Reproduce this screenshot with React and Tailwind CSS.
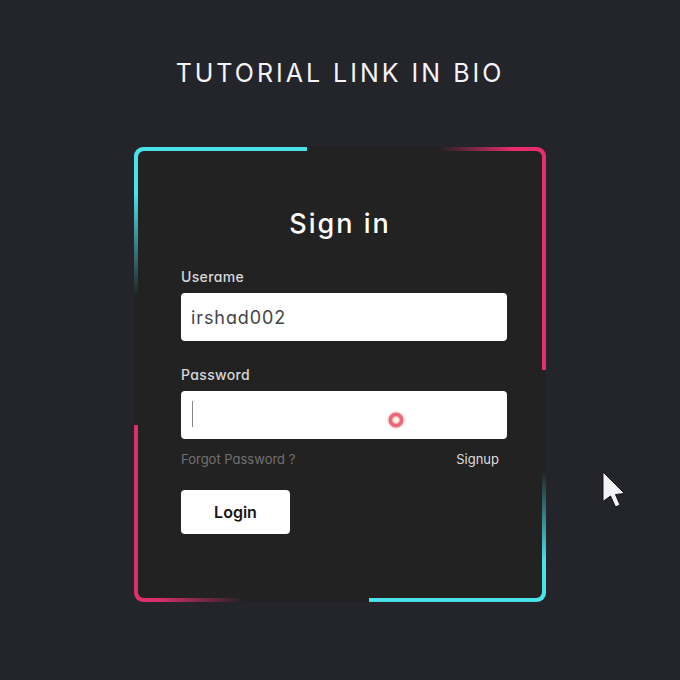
function TextField({ id, label, type, defaultValue, children }) {
  return (
    <div className="flex flex-col gap-1.5">
      <label htmlFor={id} className="text-sm leading-5 font-medium tracking-wide text-[#d8d8d8]">
        {label}
      </label>
      <div className="relative">
        <input
          id={id}
          type={type}
          defaultValue={defaultValue}
          className="block h-12 w-full rounded-sm bg-white px-2.5 text-lg tracking-wider text-[#444] outline-none"
        />
        {children}
      </div>
    </div>
  );
}

function ClickRing() {
  return (
    <svg viewBox="0 0 20 20" className="pointer-events-none absolute top-[19px] left-[205px] h-5 w-5" aria-hidden="true">
      <circle cx="10" cy="10" r="8" fill="none" stroke="#f9c4c8" strokeWidth="2" opacity="0.6" />
      <circle cx="10" cy="10" r="5.5" fill="#fff3e6" stroke="#ea6878" strokeWidth="4" />
      <circle cx="10" cy="10" r="3.5" fill="#fff3e6" stroke="#f4a3a8" strokeWidth="1" />
    </svg>
  );
}

function Pointer() {
  return (
    <svg viewBox="0 0 26 40" className="pointer-events-none absolute top-[470px] left-[601px] h-10 w-[26px]" aria-hidden="true">
      <path
        d="M2 2 L2 31.5 L9.5 26 L14.5 37 L19 35 L14.5 24.5 L23.5 23.5 Z"
        fill="#f4f4f6"
        stroke="#141418"
        strokeWidth="1"
        strokeLinejoin="round"
      />
    </svg>
  );
}

export default function App() {
  return (
    <main className="relative flex min-h-screen flex-col items-center bg-[#24242b] px-4 pt-[57px] pb-[77px] font-['Inter','Open_Sans',sans-serif] [font-feature-settings:'cv11']">
      <h1 className="text-center text-[25px] leading-8 tracking-[3px] text-[#f4f4f6]">TUTORIAL LINK IN BIO</h1>

      {/* one gradient per corner, seen only through the 4px ring */}
      <section className="mt-[58px] w-full max-w-[412px] rounded-[9px] bg-[#212123] bg-[linear-gradient(to_bottom,#4be3ea_30%,transparent),linear-gradient(to_right,transparent,#e82e6d_70%),linear-gradient(to_bottom,transparent,#4be3ea_70%),linear-gradient(to_left,transparent,#dc2f6b_80%)] bg-no-repeat p-1 [background-position:left_top,right_top,right_bottom,left_bottom] [background-size:42%_33%,26%_49%,43%_29%,27%_39%]">
        <form className="rounded-md bg-[#222222] pt-[57px] pr-[35px] pb-16 pl-[43px]" onSubmit={(e) => e.preventDefault()}>
          <h2 className="pr-2 text-center text-[27px] leading-8 font-medium tracking-[2px] text-white">Sign in</h2>

          <div className="mt-[27px] flex flex-col gap-6">
            <TextField id="username" label="Userame" type="text" defaultValue="irshad002" />
            <TextField id="password" label="Password" type="password">
              <span className="pointer-events-none absolute top-2.5 left-[11px] h-[26px] w-px bg-[#888]" />
              <ClickRing />
            </TextField>
          </div>

          <div className="mt-2.5 flex justify-between pr-2 text-[13px] leading-5">
            <a href="#forgot" className="text-[#717171]">
              Forgot Password ?
            </a>
            <a href="#signup" className="text-[#dedede]">
              Signup
            </a>
          </div>

          <button type="submit" className="mt-[21px] h-11 w-[109px] rounded-sm bg-white text-base font-semibold text-[#151515]">
            Login
          </button>
        </form>
      </section>

      <Pointer />
    </main>
  );
}
